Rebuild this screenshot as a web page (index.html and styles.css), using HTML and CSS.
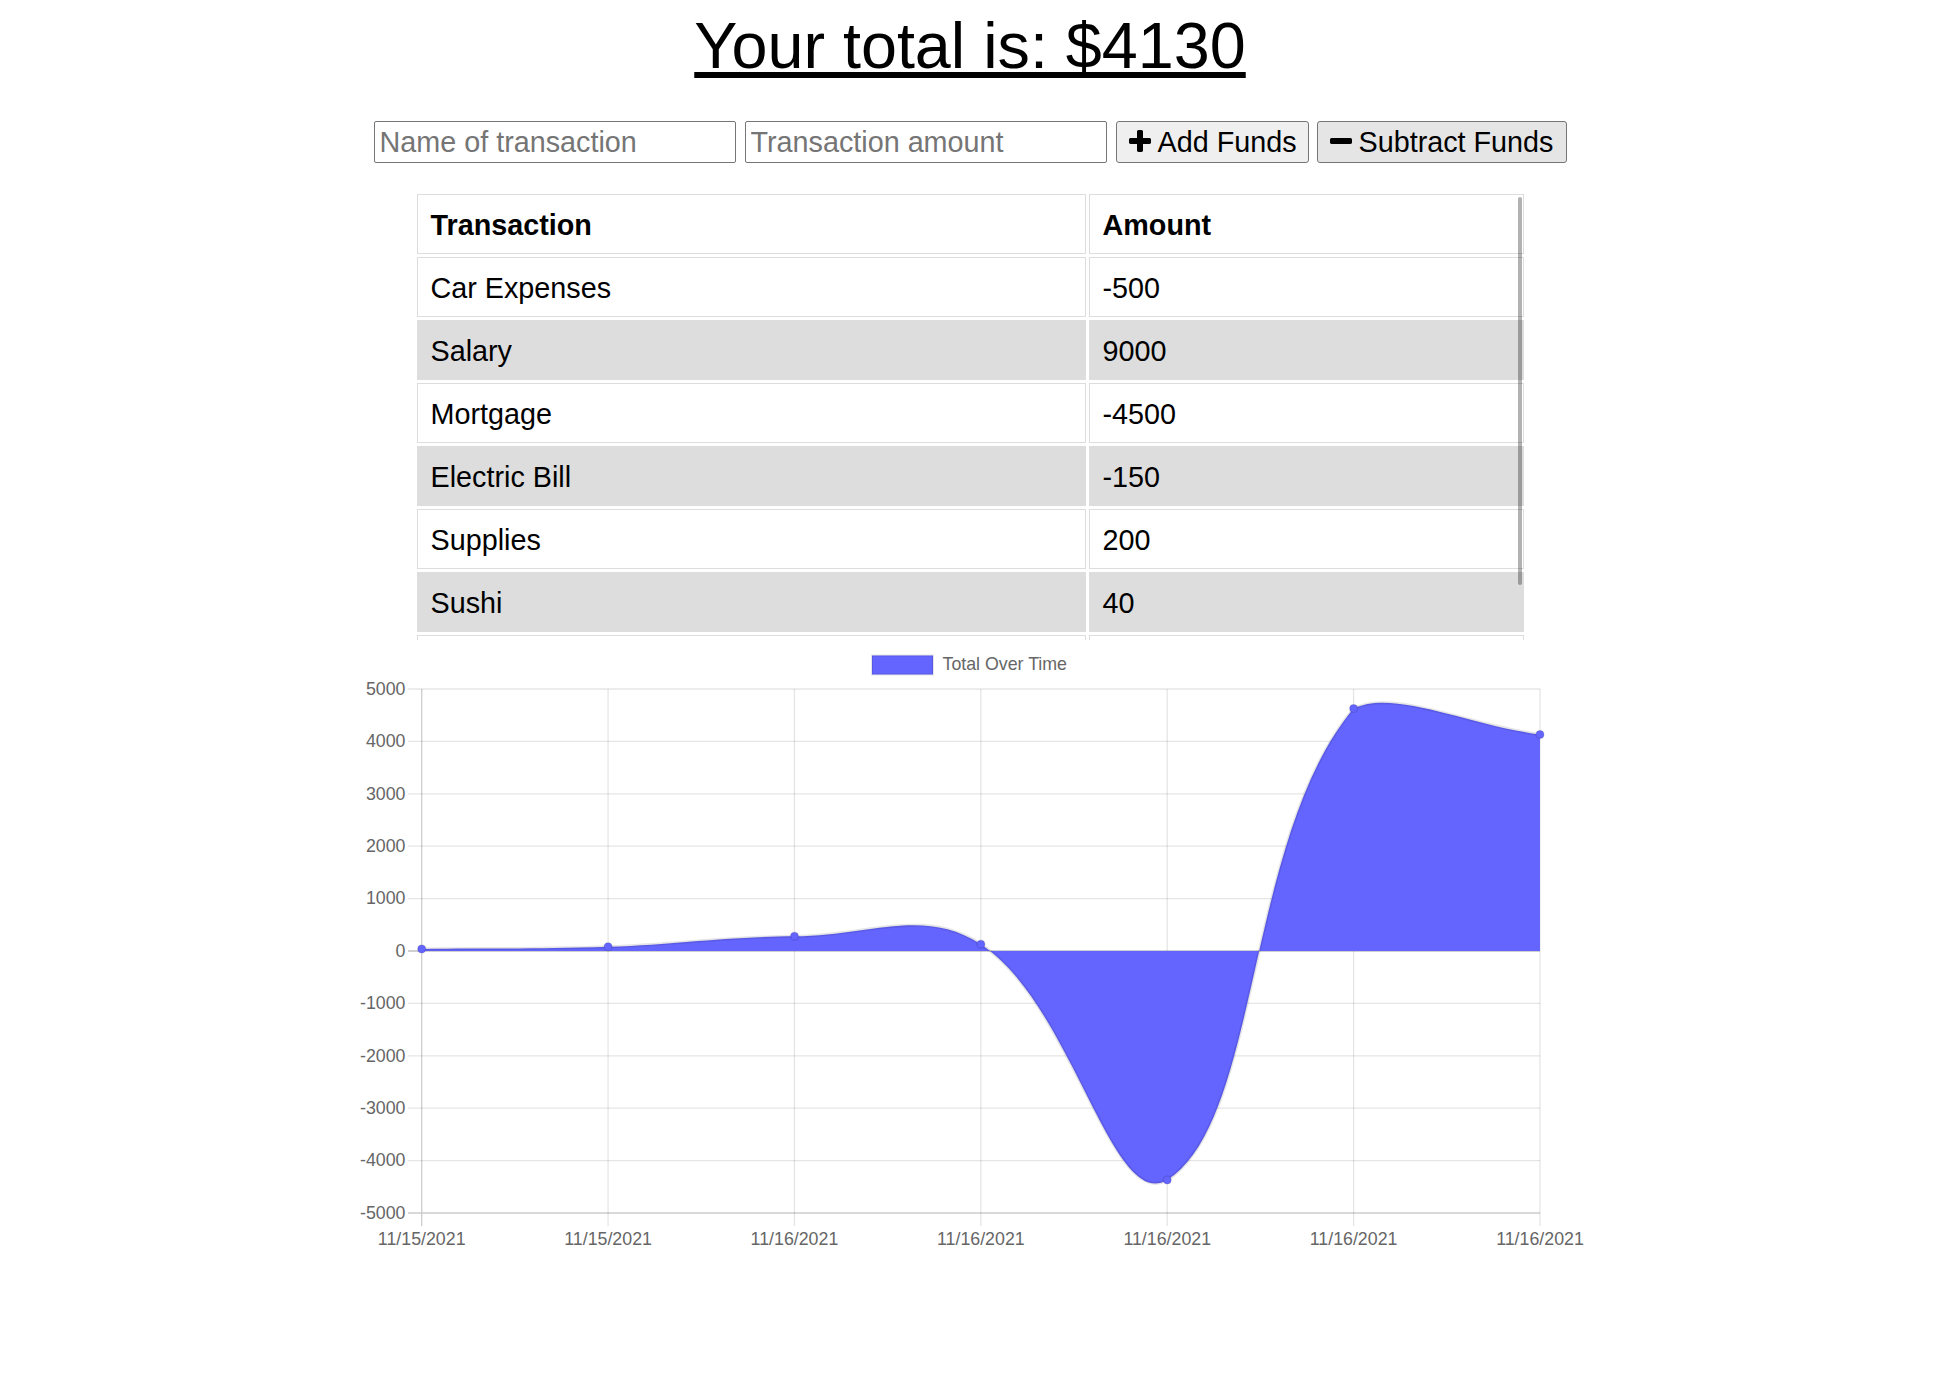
FILE: index.html
```html
<!DOCTYPE html>
<html lang="en">
<head>
<meta charset="utf-8">
<title>Budget Tracker</title>
<link rel="stylesheet" href="styles.css">
</head>
<body>
<main class="page">
  <h1 class="total">Your total is: $4130</h1>

  <form class="entry">
    <input class="field" type="text" placeholder="Name of transaction">
    <input class="field" type="number" placeholder="Transaction amount">
    <button class="btn btn-add" type="button"><svg class="icon" viewBox="0 192 1408 1408" aria-hidden="true"><path d="M1408 800v192q0 40-28 68t-68 28h-416v416q0 40-28 68t-68 28h-192q-40 0-68-28t-28-68v-416h-416q-40 0-68-28t-28-68v-192q0-40 28-68t68-28h416v-416q0-40 28-68t68-28h192q40 0 68 28t28 68v416h416q40 0 68 28t28 68z"/></svg>Add Funds</button>
    <button class="btn btn-sub" type="button"><svg class="icon" viewBox="0 192 1408 1408" aria-hidden="true"><path d="M1408 800v192q0 40-28 68t-68 28h-1216q-40 0-68-28t-28-68v-192q0-40 28-68t68-28h1216q40 0 68 28t28 68z"/></svg>Subtract Funds</button>
  </form>

  <div class="ledger">
    <table class="ledger-table">
      <thead>
        <tr><th class="col-name">Transaction</th><th>Amount</th></tr>
      </thead>
      <tbody>
        <tr><td>Car Expenses</td><td>-500</td></tr>
        <tr><td>Salary</td><td>9000</td></tr>
        <tr><td>Mortgage</td><td>-4500</td></tr>
        <tr><td>Electric Bill</td><td>-150</td></tr>
        <tr><td>Supplies</td><td>200</td></tr>
        <tr><td>Sushi</td><td>40</td></tr>
        <tr><td>Lunch</td><td>40</td></tr>
      </tbody>
    </table>
    <div class="scroll-thumb"></div>
  </div>

  <svg class="chart" viewBox="340 640 1260 620" width="1260" height="620" role="img" aria-label="Total Over Time">
    <g class="legend">
      <rect class="legend-box" x="872" y="655.5" width="61" height="19"/>
      <text x="942.5" y="669.5">Total Over Time</text>
    </g>

    <path class="grid" d="M408 689H1540M408 741.4H1540M408 793.8H1540M408 846.2H1540M408 898.6H1540M408 1003.4H1540M408 1055.8H1540M408 1108.2H1540M408 1160.6H1540"/>
    <path class="grid" d="M608.08 689V1226M794.46 689V1226M980.84 689V1226M1167.22 689V1226M1353.6 689V1226M1539.98 689V1226"/>
    <path class="axis" d="M421.7 689V1226M408 1213H1540"/>
    <path class="zero" d="M408 951H1540"/>

    <path class="area" d="M421.7 951L421.7 948.9C496.25 948.06 533.58 949.32 608.08 946.81C682.69 944.29 719.89 936.85 794.46 936.33C868.99 935.81 923.74 906.86 980.84 944.19C1072.84 1004.33 1111.73 1213 1167.22 1179.99C1260.83 1120.77 1244.86 838.32 1353.6 708.39C1393.96 689 1465.43 724.11 1539.98 734.59L1539.98 951Z"/>
    <path class="line" d="M421.7 948.9C496.25 948.06 533.58 949.32 608.08 946.81C682.69 944.29 719.89 936.85 794.46 936.33C868.99 935.81 923.74 906.86 980.84 944.19C1072.84 1004.33 1111.73 1213 1167.22 1179.99C1260.83 1120.77 1244.86 838.32 1353.6 708.39C1393.96 689 1465.43 724.11 1539.98 734.59"/>

    <g class="points">
      <circle cx="421.7" cy="948.9" r="4"/>
      <circle cx="608.08" cy="946.81" r="4"/>
      <circle cx="794.46" cy="936.33" r="4"/>
      <circle cx="980.84" cy="944.19" r="4"/>
      <circle cx="1167.22" cy="1179.99" r="4"/>
      <circle cx="1353.6" cy="708.39" r="4"/>
      <circle cx="1539.98" cy="734.59" r="4"/>
    </g>

    <g class="y-labels">
      <text x="405.5" y="694.8">5000</text>
      <text x="405.5" y="747.2">4000</text>
      <text x="405.5" y="799.6">3000</text>
      <text x="405.5" y="852">2000</text>
      <text x="405.5" y="904.4">1000</text>
      <text x="405.5" y="956.8">0</text>
      <text x="405.5" y="1009.2">-1000</text>
      <text x="405.5" y="1061.6">-2000</text>
      <text x="405.5" y="1114">-3000</text>
      <text x="405.5" y="1166.4">-4000</text>
      <text x="405.5" y="1218.8">-5000</text>
    </g>

    <g class="x-labels">
      <text x="421.7" y="1244.5">11/15/2021</text>
      <text x="608.08" y="1244.5">11/15/2021</text>
      <text x="794.46" y="1244.5">11/16/2021</text>
      <text x="980.84" y="1244.5">11/16/2021</text>
      <text x="1167.22" y="1244.5">11/16/2021</text>
      <text x="1353.6" y="1244.5">11/16/2021</text>
      <text x="1539.98" y="1244.5">11/16/2021</text>
    </g>
  </svg>
</main>
</body>
</html>
```
FILE: styles.css
```css
* {
  box-sizing: border-box;
}

html,
body {
  margin: 0;
  background: #fff;
}

body {
  font-family: "Liberation Sans", Arial, sans-serif;
  color: #000;
}

.page {
  display: flex;
  flex-direction: column;
  align-items: center;
  padding-top: 9px;
}

.total {
  margin: 0;
  font-size: 64.7px;
  font-weight: 400;
  line-height: 74px;
  text-decoration: underline;
}

.entry {
  display: flex;
  gap: 9px;
  margin: 38px 0 0;
}

.field {
  width: 362px;
  height: 42px;
  margin: 0;
  padding: 0 5px;
  border: 1px solid #767676;
  border-radius: 2px;
  background: #fff;
  color: #000;
  font: 28.75px/32px "Liberation Sans", Arial, sans-serif;
}

.field::placeholder {
  color: #757575;
}

.btn {
  height: 42px;
  margin: 0;
  padding: 0 12px;
  border: 1px solid #767676;
  border-radius: 3px;
  background: #efefef;
  color: #000;
  font: 28.75px/32px "Liberation Sans", Arial, sans-serif;
  text-align: left;
  white-space: nowrap;
}

.btn-add {
  width: 193px;
}

.btn-sub {
  width: 250px;
  margin-left: -1px;
  background: #e5e5e5;
}

.icon {
  width: 22px;
  height: 22px;
  margin-right: 7px;
  vertical-align: baseline;
  fill: currentColor;
}

.ledger {
  position: relative;
  width: 1113px;
  height: 449px;
  margin-top: 28px;
  overflow: hidden;
}

.ledger-table {
  width: 100%;
  table-layout: fixed;
  border-collapse: separate;
  border-spacing: 3px;
  font-size: 28.75px;
}

.ledger-table th,
.ledger-table td {
  padding: 14px 13px 12px;
  border: 1px solid #dddddd;
  line-height: 32px;
  text-align: left;
  white-space: nowrap;
}

.ledger-table th {
  font-weight: 700;
}

.ledger-table .col-name {
  width: 669px;
}

.ledger-table tbody tr:nth-child(even) td {
  background: #dddddd;
}

.scroll-thumb {
  position: absolute;
  top: 6px;
  right: 5px;
  width: 4px;
  height: 388px;
  border-radius: 2px;
  background: rgba(0, 0, 0, 0.3);
}

.chart {
  display: block;
  width: 1260px;
  height: 620px;
}

.chart text {
  font-family: "Liberation Sans", Arial, sans-serif;
  font-size: 17.8px;
  fill: #666;
}

.legend-box {
  fill: #6464ff;
  stroke: rgba(0, 0, 0, 0.1);
  stroke-width: 2;
}

.grid {
  fill: none;
  stroke: rgba(0, 0, 0, 0.1);
  stroke-width: 1.3;
}

.axis {
  fill: none;
  stroke: rgba(0, 0, 0, 0.2);
  stroke-width: 1.3;
}

.zero {
  fill: none;
  stroke: rgba(0, 0, 0, 0.25);
  stroke-width: 1.3;
}

.area {
  fill: #6464ff;
}

.line {
  fill: none;
  stroke: rgba(0, 0, 0, 0.1);
  stroke-width: 3;
}

.points circle {
  fill: #6464ff;
  stroke: rgba(0, 0, 0, 0.1);
  stroke-width: 1.5;
}

.y-labels text {
  text-anchor: end;
}

.x-labels text {
  text-anchor: middle;
}
```
